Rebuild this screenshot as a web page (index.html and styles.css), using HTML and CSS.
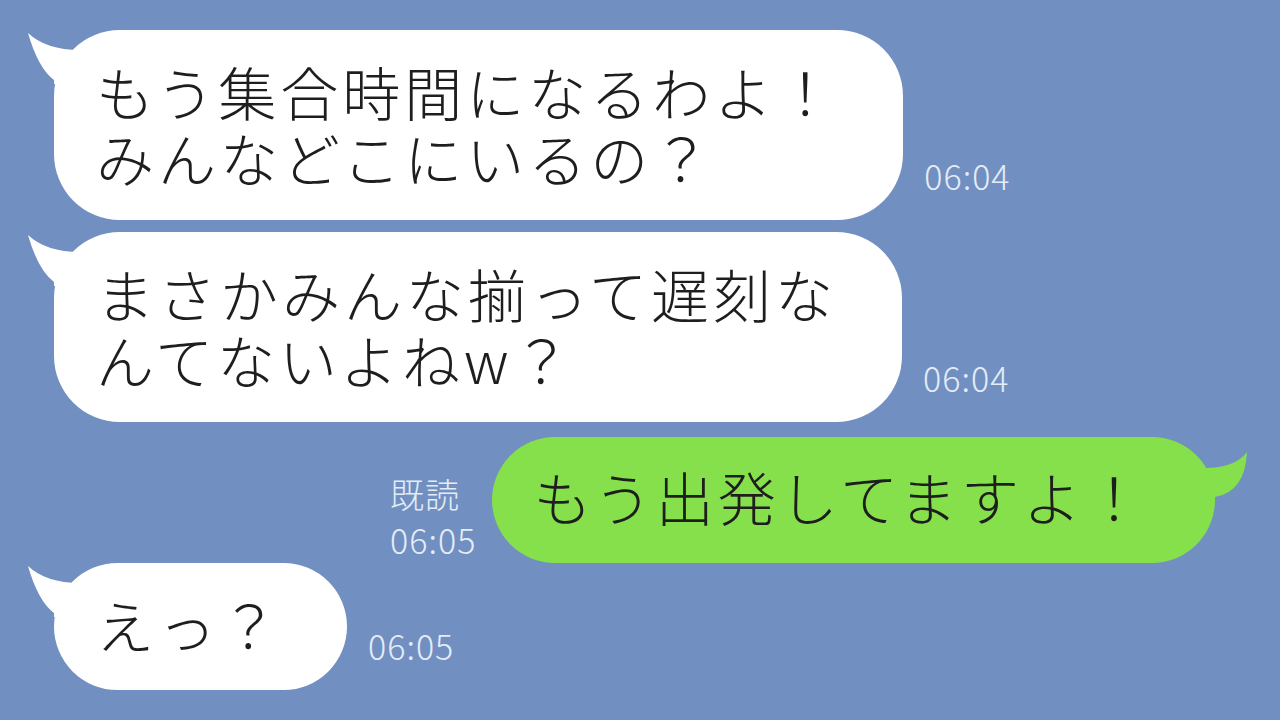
FILE: index.html
```html
<!DOCTYPE html>
<html lang="ja">
<head>
    <meta charset="UTF-8">
    <meta name="viewport" content="width=device-width, initial-scale=1.0">
    <title>トーク</title>
    <link rel="stylesheet" href="styles.css">
</head>
<body>
    <div class="chat">
        <div class="row row-first">
            <div class="bubble">
                <svg class="tail" viewBox="-30 0 60 60" width="60" height="60"><path d="M -26 3 Q -8 20 26 20 L 26 54 L 0 54 L 0 50 Q -16 38 -26 3 Z"/></svg>
                もう集合時間になるわよ！<br>みんなどこにいるの？
            </div>
            <div class="meta">06:04</div>
        </div>
        <div class="row row-second">
            <div class="bubble">
                <svg class="tail" viewBox="-30 0 60 60" width="60" height="60"><path d="M -26 3 Q -8 20 26 20 L 26 54 L 0 54 L 0 50 Q -16 38 -26 3 Z"/></svg>
                まさかみんな揃って遅刻な<br>んてないよねw？
            </div>
            <div class="meta">06:04</div>
        </div>
        <div class="row row-mine">
            <div class="meta meta-mine">
                <span>既読</span>
                <span>06:05</span>
            </div>
            <div class="bubble bubble-mine">
                <svg class="tail tail-mine" viewBox="-30 0 70 70" width="70" height="70"><path d="M 32 15 Q 20 31 -10 31 L -10 66 L 0 66 L 0 60 Q 30 55 32 15 Z"/></svg>
                もう出発してますよ！
            </div>
        </div>
        <div class="row row-last">
            <div class="bubble">
                <svg class="tail" viewBox="-30 0 60 60" width="60" height="60"><path d="M -26 3 Q -8 20 26 20 L 26 54 L 0 54 L 0 50 Q -16 38 -26 3 Z"/></svg>
                えっ？
            </div>
            <div class="meta">06:05</div>
        </div>
    </div>
</body>
</html>
```

FILE: styles.css
```css
body {
    margin: 0;
    background-color: #7190c1;
    font-family: "Noto Sans CJK JP", "Noto Sans", sans-serif;
}
.chat {
    width: 1280px;
    height: 720px;
    overflow: hidden;
    padding: 30px 0 0 54px;
    box-sizing: border-box;
    display: flex;
    flex-direction: column;
}
.row {
    display: flex;
    align-items: flex-end;
}
.row-second {
    margin-top: 12px;
}
.row-mine {
    margin-top: 15px;
    justify-content: flex-end;
    padding-right: 65px;
}
.row-last {
    margin-top: 0;
}
.bubble {
    position: relative;
    background-color: #ffffff;
    color: #1e1e1e;
    font-size: 58px;
    font-weight: 300;
    line-height: 66px;
    letter-spacing: 4px;
    white-space: nowrap;
    padding: 28px 65px 30px 42px;
    border-radius: 66px;
}
.row-last .bubble {
    padding-bottom: 33px;
}
.bubble-mine {
    background-color: #86e04b;
    padding: 26px 68px 34px 41px;
    border-radius: 63px;
}
.tail {
    position: absolute;
    left: -30px;
    top: 0;
    fill: #ffffff;
}
.tail-mine {
    left: auto;
    right: -40px;
    fill: #86e04b;
}
.meta {
    color: #e4ecf7;
    font-size: 34px;
    font-weight: 300;
    line-height: 40px;
    letter-spacing: 1px;
    margin: 0 0 24px 21px;
}
.meta-mine {
    display: flex;
    flex-direction: column;
    line-height: 46px;
    margin: 0 16px 0 0;
}
```
